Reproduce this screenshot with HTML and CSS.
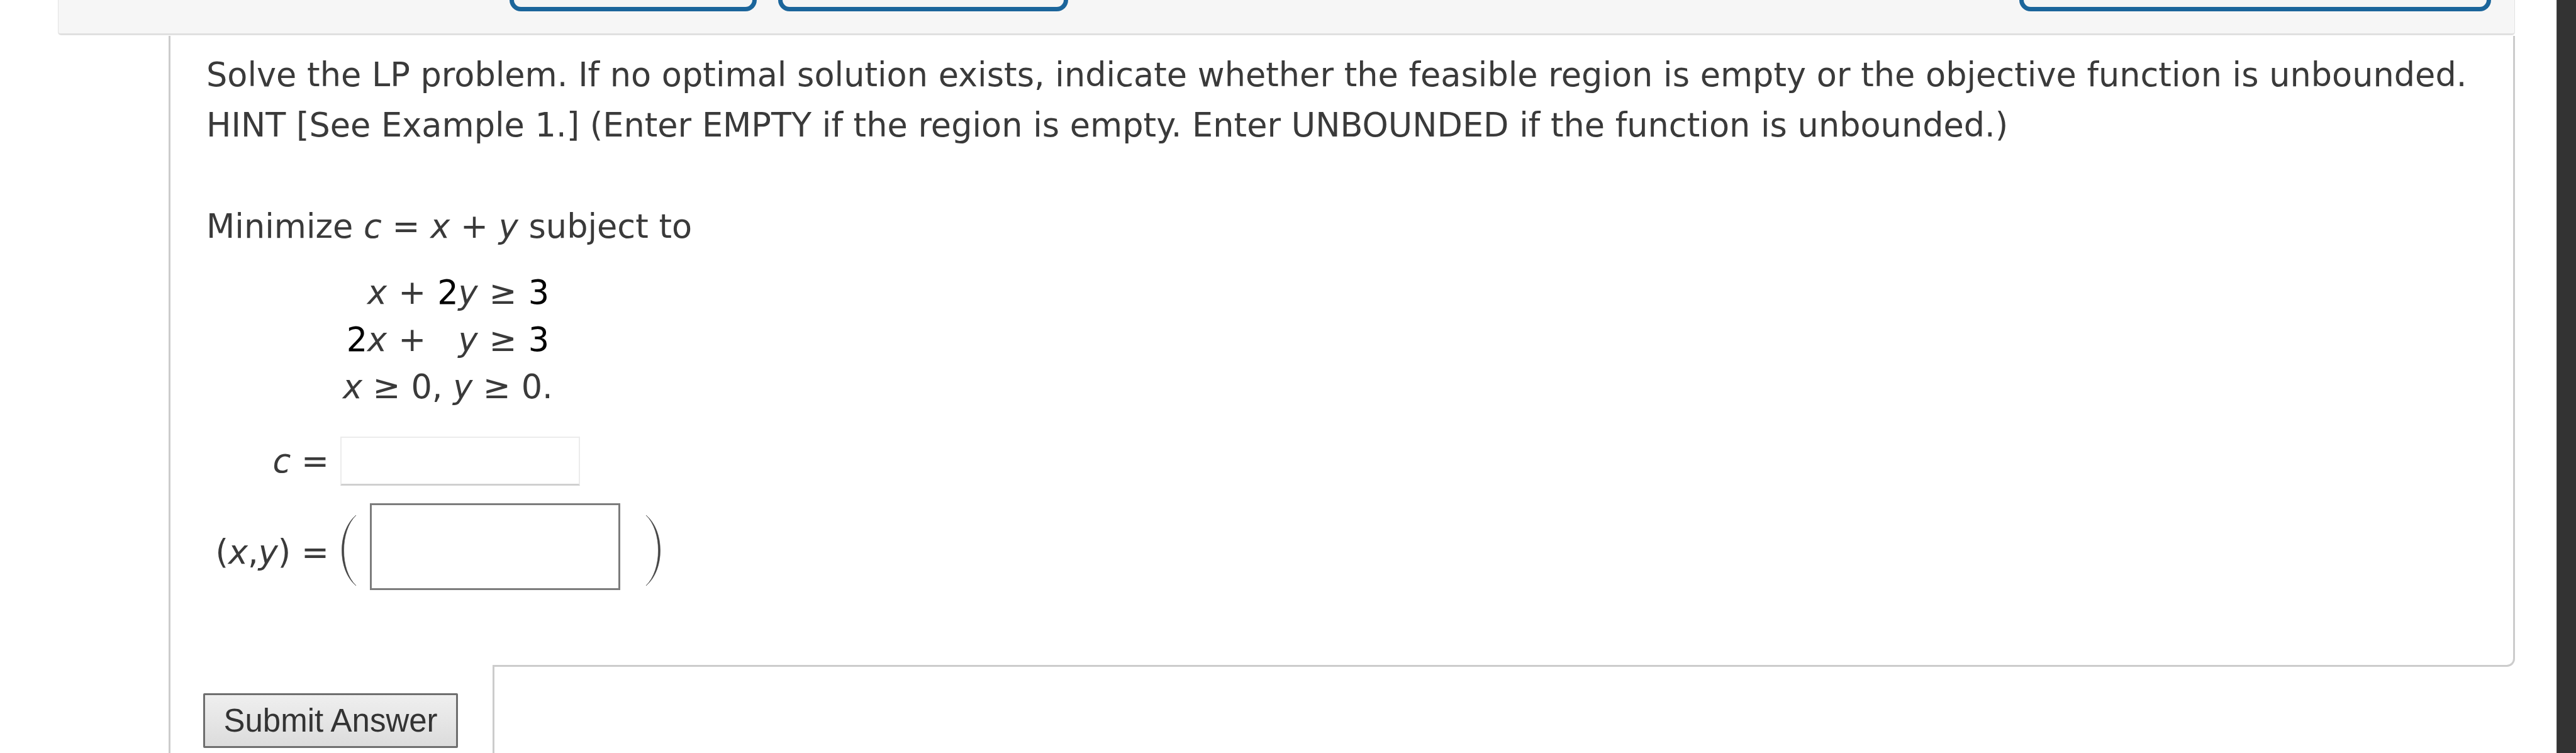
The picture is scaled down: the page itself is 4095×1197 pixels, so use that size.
FILE: index.html
```html
<!DOCTYPE html>
<html lang="en">
<head>
<meta charset="utf-8">
<title>LP problem</title>
<link rel="stylesheet" href="styles.css">
</head>
<body>
<div class="page">
  <div class="main">
    <div class="toolbar">
      <button class="tb-btn tb-btn-1" type="button"></button>
      <button class="tb-btn tb-btn-2" type="button"></button>
      <button class="tb-btn tb-btn-3" type="button"></button>
    </div>
    <div class="question">
      <p class="intro">Solve the LP problem. If no optimal solution exists, indicate whether the feasible region is empty or the objective function is unbounded. HINT [See Example 1.] (Enter EMPTY if the region is empty. Enter UNBOUNDED if the function is unbounded.)</p>
      <p class="objective">Minimize <i>c</i> = <i>x</i> + <i>y</i> subject to</p>
      <div class="constraints">
        <div class="cgrid">
          <span class="cell"><i>x</i></span>
          <span class="cell">+</span>
          <span class="cell"><span class="num">2</span><i>y</i></span>
          <span class="cell">≥</span>
          <span class="cell num">3</span>
          <span class="cell"><span class="num">2</span><i>x</i></span>
          <span class="cell">+</span>
          <span class="cell"><i>y</i></span>
          <span class="cell">≥</span>
          <span class="cell num">3</span>
        </div>
        <div class="crow"><i>x</i> ≥ 0, <i>y</i> ≥ 0.</div>
      </div>
      <div class="answers">
        <label class="lbl" for="ans-c"><i>c</i> =</label>
        <input class="ans-c" id="ans-c" type="text">
        <label class="lbl lbl-xy" for="ans-xy">(<i>x</i>,<i>y</i>) =</label>
        <div class="pair">
          <svg class="paren" width="26" height="114" viewBox="0 0 26 114"><path d="M25 1 C-5 26 -5 88 25 113 C-1 88 -1 26 25 1 Z" fill="#444" stroke="#444" stroke-width="0.6"/></svg>
          <input class="ans-xy" id="ans-xy" type="text">
          <svg class="paren" width="26" height="114" viewBox="0 0 26 114"><path d="M1 1 C31 26 31 88 1 113 C27 88 27 26 1 1 Z" fill="#444" stroke="#444" stroke-width="0.6"/></svg>
        </div>
      </div>
    </div>
    <div class="bottom">
      <div class="submit-area">
        <button class="submit" type="button">Submit Answer</button>
      </div>
      <div class="feedback"></div>
    </div>
  </div>
  <div class="scrollbar"></div>
</div>
</body>
</html>
```

FILE: styles.css
```css
html, body {
  margin: 0;
  padding: 0;
  background: #ffffff;
}

body {
  font-family: "DejaVu Sans", Verdana, sans-serif;
  color: #3a3a3a;
  overflow: hidden;
}

.page {
  display: flex;
  min-height: 100vh;
  padding-left: 92px;
  box-sizing: border-box;
}

.main {
  flex: 1;
  display: flex;
  flex-direction: column;
}

.scrollbar {
  width: 31px;
  margin-left: 66px;
  background: #333333;
  border-left: 1px solid #4a4a4a;
  box-sizing: border-box;
}

/* top toolbar */
.toolbar {
  display: flex;
  align-items: flex-start;
  height: 56px;
  box-sizing: border-box;
  background: #f6f6f6;
  border-left: 1px solid #e2e2e2;
  border-right: 1px solid #e2e2e2;
  border-bottom: 3px solid #e0e0e0;
  border-radius: 0 0 5px 5px;
  padding-left: 717px;
  padding-right: 37px;
}

.tb-btn {
  height: 18px;
  box-sizing: border-box;
  margin: 0;
  padding: 0;
  background: #f5f5f5;
  border: 7px solid #1b659b;
  border-top: none;
  border-radius: 0 0 18px 18px;
}

.tb-btn-1 { width: 393px; }
.tb-btn-2 { width: 461px; margin-left: 34px; }
.tb-btn-3 { width: 750px; margin-left: auto; }

/* question box */
.question {
  margin-top: 1px;
  margin-left: 176px;
  border-left: 3px solid #cccccc;
  border-right: 3px solid #cccccc;
  border-bottom: 3px solid #cccccc;
  border-bottom-right-radius: 13px;
  padding: 22px 40px 119px 57px;
  font-size: 52.5px;
  line-height: 80px;
}

.question p {
  margin: 0;
}

.intro {
  margin-bottom: 81px !important;
}

.question i {
  font-style: italic;
}

.num {
  color: #000000;
}

.constraints {
  display: inline-flex;
  flex-direction: column;
  align-items: center;
  margin-top: 27px;
  margin-left: 217px;
  line-height: 75px;
}

.cgrid {
  display: grid;
  grid-template-columns: repeat(5, auto);
  column-gap: 18px;
  justify-items: end;
}

.crow {
  white-space: nowrap;
}

/* answer rows */
.answers {
  display: grid;
  grid-template-columns: 195px auto;
  column-gap: 18px;
  row-gap: 27px;
  align-items: center;
  justify-items: start;
  margin-top: 41px;
}

.lbl {
  justify-self: end;
  white-space: nowrap;
}

.lbl-xy {
  padding-top: 18px;
}

.ans-c {
  width: 381px;
  height: 78px;
  box-sizing: border-box;
  margin: 0;
  border: 2px solid #ececec;
  border-bottom: 3px solid #d0d0d0;
  background: #ffffff;
  font-size: 40px;
}

.pair {
  display: flex;
  align-items: center;
}

.paren {
  display: block;
  margin-top: 12px;
}

.ans-xy {
  width: 398px;
  height: 138px;
  box-sizing: border-box;
  margin: 0 40px 0 21px;
  border: 3px solid #7c7c7c;
  background: #ffffff;
  font-size: 40px;
}

/* bottom row */
.bottom {
  display: flex;
  flex: 1;
  margin-top: -3px;
  margin-left: 176px;
}

.submit-area {
  width: 515px;
  box-sizing: border-box;
  border-left: 3px solid #cccccc;
  background: #ffffff;
  padding: 45px 0 0 52px;
}

.feedback {
  flex: 1;
  border-left: 3px solid #cccccc;
}

.submit {
  width: 405px;
  height: 87px;
  box-sizing: border-box;
  margin: 0;
  padding: 0;
  font-family: "Liberation Sans", Arial, sans-serif;
  font-size: 51px;
  color: #333333;
  background: linear-gradient(#efefef, #dcdcdc);
  border: 3px solid #6e6e6e;
  border-radius: 2px;
}
```
